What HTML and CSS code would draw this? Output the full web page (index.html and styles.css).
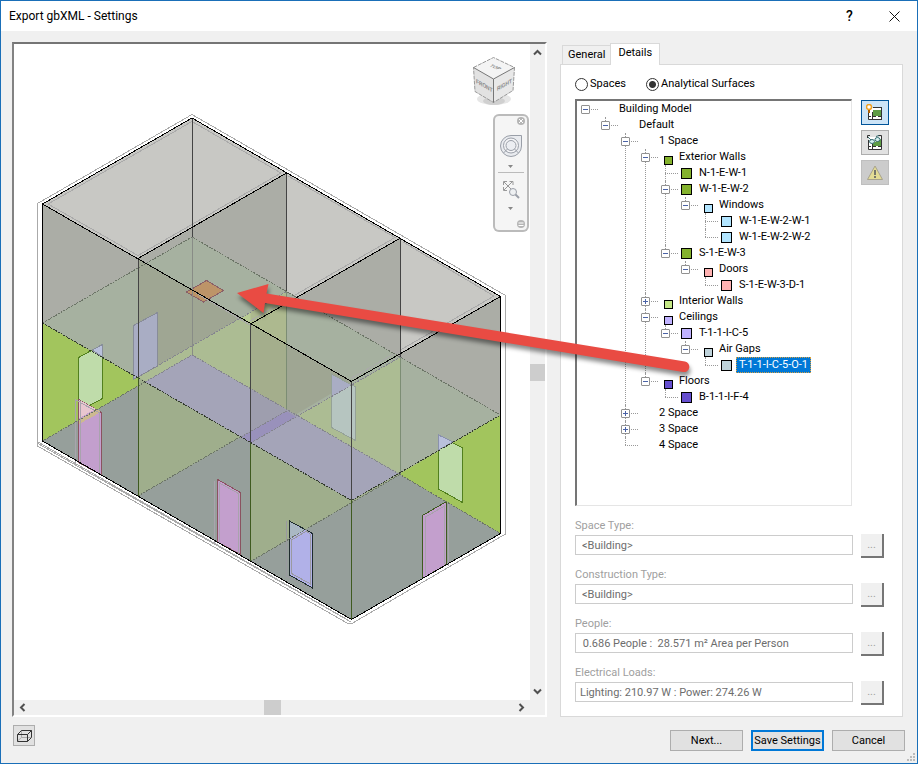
FILE: index.html
```html
<!DOCTYPE html>
<html lang="en">
<head>
<meta charset="utf-8">
<title>Export gbXML - Settings</title>
<link rel="stylesheet" href="styles.css">
</head>
<body>
<div class="dialog">
  <header class="titlebar">
    <h1>Export gbXML - Settings</h1>
    <button class="title-btn" aria-label="Help">?</button>
    <button class="title-btn" aria-label="Close"><svg width="11" height="11" viewBox="0 0 11 11"><path d="M.5.5l10 10M10.5.5l-10 10" stroke="#111" fill="none"/></svg></button>
  </header>

  <main class="content">
    <section class="view" aria-label="Model view">
      <div class="canvas">
        <svg class="model" viewBox="14 44 516 655" preserveAspectRatio="xMinYMin meet">
          <!-- volumes -->
          <path fill="#abada6" d="M42.500 204L192 118 500.500 296.500V533.500L351.500 619.500 42.500 441z"/>
          <path fill="#c8c8c4" d="M42.500 204L192 118 286.500 173 138 258.500zM286.500 173L400.500 238 286.500 303zM400.500 238L500.500 296.500 400.500 354z"/>
          <path fill="#a6b1a0" d="M42.500 323L192 237 500.500 415 351.500 500.500z"/>
          <path fill="#9fa693" d="M138 259L241 318 138 377z"/>
          <path fill="#969f9b" d="M42.500 441L145 382 351.500 500.500 399 474 500.500 533.500 351.500 619.500z"/>
          <path fill="#a2c55d" d="M42.500 323L145 382 42.500 441zM500.500 415L399 474 500.500 533.500z"/>
          <path fill="#acbc93" d="M138 377L286.500 291.500V409.500L192 355 145 382zM297 416L400.500 357V474L297 416z"/>
          <path fill="#b8cc94" d="M241 318L286.500 291.500V303L250.500 324z"/>
          <path fill="#adb98f" d="M250.500 312L286.500 292V344L250.500 324z"/>
          <path fill="#9fa693" d="M286.500 344L351.500 381.500 286.500 420z"/>
          <path fill="#a4ae8c" d="M250.500 324L286.500 344V410L250.500 390z"/>
          <path fill="#9fae8c" d="M138 377L241 437 138 496zM250.500 443L351.500 500.500 399 472V475L250.500 561.500z"/>
          <path fill="#a4a4b8" d="M192 355L398 474 351.500 500.500 145 382z"/>
          <path fill="#9e9eae" d="M250.500 389L297 416 250.500 443 240 437 250.500 431z"/>
          <path fill="#9991bb" d="M241 437L286.500 411 296 417 250.500 443z"/>
          <!-- openings -->
          <g shape-rendering="crispEdges">
            <path fill="#bfdcaa" stroke="#52801e" d="M78.500 357.500L102.500 344.500V398.500L78.500 411.500z"/>
            <path fill="#b9c0dc" stroke="#878e9a" d="M92 350L102.500 344.500V357z"/>
            <path fill="#a9adc4" stroke="#888c98" d="M133.500 325.500L157.500 312.500V366L133.500 379.500z"/>
            <path fill="#b6c5c0" stroke="#95a297" d="M331.500 374L355.500 387V440.500L331.500 427.500z"/>
            <path fill="#a9adc4" d="M332 375L351 385 332 397z"/>
            <path fill="#bfdcaa" stroke="#52801e" d="M438.500 435L462.500 448V502.500L438.500 489z"/>
            <path fill="#b9c0dc" stroke="#8a91ac" d="M438.500 450V435L453 442z"/>
            <path fill="#c39fcd" stroke="#8a5360" d="M78.500 399.500L101.500 412.500V475L78.500 462.500z"/>
            <path fill="#e8c6cf" d="M79 400L96 409 79 418z"/><path fill="#ccb990" d="M79 420L97 409 101 412 79 424z"/>
            <path fill="none" stroke="#a9a3ad" d="M75.500 463V400L80.500 402V463M81 403L99.500 413V473"/>
            <path fill="#c39fcd" stroke="#8a5360" d="M217.500 479.500L240.500 492.500V554.500L217.500 542z"/>
            <path fill="none" stroke="#a9a3ad" d="M214.500 543V480.500M219.500 542V483L238.500 493.500V554"/>
            <path fill="#c39fcd" stroke="#3f5a20" d="M422.500 515.500L446.500 501.500V564.500L422.500 578.500z"/>
            <path fill="none" stroke="#a9a3ad" d="M425.500 575V517L444.500 506V564M448.500 503V566"/>
            <path fill="#b1b1e8" stroke="#1e2b2e" d="M289.500 521L312.500 533.500V588L289.500 575z"/>
            <path fill="#aab8c4" d="M290 522L305 530 290 539z"/>
            <path fill="none" stroke="#9a9aa0" d="M286.500 521V576L311 589M291.500 540V573.500L310.500 584V534.500L306.500 531 291.500 540"/>
            <path fill="#bd9468" stroke="#8a6068" d="M186.500 292L206.500 280.500 223.500 290.500 203.500 302z"/>
          </g>
          <!-- edges -->
          <g fill="none" shape-rendering="crispEdges">
            <path stroke="#aaa" d="M48 204L192 121.500 281 173 138 255.500 48 204M288 176L395 237.500 250 321M403 242L494 296 351 378.500M196 293L250 325M37.500 446V203.500L192 114.500 505.500 295.500V534L351 624 347 623 37.500 446M37 443L351 622M38 442L348 620"/>
            <path stroke="#888c86" d="M192 237V355"/>
            <path stroke="#7c8d74" d="M286.500 291V409M400.500 357V474"/>
            <path stroke="#6c7567" stroke-dasharray="2 1" d="M42.500 323L192 237 500.500 415M145 382L42.500 441M399 474L500.500 533.500M138 496L240 437M250.500 561.500L399 475"/>
            <path stroke="#85858f" stroke-dasharray="2 1" d="M145 382L192 355 399 474M138 377L286.500 291.500M241 437L286.500 411M250.500 443L400.500 357"/>
            <path stroke="#333b2e" stroke-dasharray="2 1" d="M42.500 323L351.500 500.500 500.500 415"/>
            <path stroke="#444" d="M192 118V237M286.500 173V291M400.500 238V357M138 258V377M250.500 324V443M351.500 381V500"/>
            <path stroke="#3f5a20" d="M138 377V496M250.500 443V561M351.500 500V619"/>
            <path stroke="#000" d="M42.500 204L192 118 500.500 296.500 351.500 381.500 42.500 204M138 258.500L286.500 173M250.500 324L400.500 238M42.500 441L351.500 619.500 500.500 533.500M42.500 204V441M500.500 296.500V534"/>
          </g>
        </svg>

        <svg class="viewcube" width="48" height="56" viewBox="470 54 48 56" role="img" aria-label="View cube">
          <ellipse cx="494" cy="99" rx="17" ry="6" fill="#e6e6e6"/>
          <ellipse cx="494" cy="101" rx="11" ry="4" fill="#d0d0d0"/>
          <path d="M473.500 67.500L493.500 57.500 514.500 67.500 493.500 79z" fill="#f4f4f4"/>
          <path d="M473.500 67.500L493.500 79V102.500L475 91.500z" fill="#e2e2e2"/>
          <path d="M514.500 67.500L493.500 79V102.500L513 90.500z" fill="#e8e8e8"/>
          <path d="M473.500 67.500L493.500 57.500 514.500 67.500 513 90.500 493.500 102.500 475 91.500z" fill="none" stroke="#999" stroke-dasharray="4 1"/>
          <path d="M473.500 67.500L493.500 79 514.500 67.500M493.500 79V102.500" fill="none" stroke="#777"/>
          <g fill="#888" font-family="Liberation Sans" font-weight="bold" font-size="6">
            <text transform="matrix(.8 .45 0 1 476 83)">FRONT</text>
            <text transform="matrix(.8 -.45 0 1 497 91)">RIGHT</text>
            <text transform="matrix(.8 .35 -.8 .45 489 66)">TOP</text>
          </g>
        </svg>

        <div class="navbar">
          <svg width="36" height="118" viewBox="493 114 36 118" fill="none" stroke="#9a9fa8">
            <g stroke="none" fill="#b5b5b5"><circle cx="521" cy="121" r="4"/><circle cx="521" cy="224" r="4"/></g>
            <path stroke="#fff" d="M519 119l4 4M523 119l-4 4M518.500 223H523.500M518.500 225.500H523.500"/>
            <path fill="#e9ebef" d="M511 135.500H521.500V146A10.500 10.500 0 1 1 511 135.500z"/>
            <circle cx="511" cy="145.500" r="7.500" fill="#f5f5f7"/><circle cx="511" cy="145.500" r="5" fill="#eceef2"/>
            <path d="M503.500 153L507.500 149M518.500 153L514.500 149"/>
            <path d="M498 172.500H524" stroke="#bbb"/>
            <path fill="#888" stroke="none" d="M508 165H513L510.500 168zM508 207H513L510.500 210z"/>
            <path stroke="#999" d="M504 182L512 190M512 182L504 190M503.500 185V181.500H507M509.500 181.500H513V185M503.500 187V190.500H507"/>
            <circle cx="513" cy="192" r="3.500" fill="#eef0f2"/><path stroke-width="2" d="M515.500 194.500L519 198"/>
          </svg>
        </div>
      </div>
      <div class="vscroll">
        <button aria-label="Scroll up"><svg width="9" height="7" viewBox="0 0 9 7"><path d="M1 5.500L4.500 2 8 5.500" /></svg></button>
        <i class="vthumb"></i>
        <button aria-label="Scroll down"><svg width="9" height="7" viewBox="0 0 9 7"><path d="M1 1.500L4.500 5 8 1.500"/></svg></button>
      </div>
      <div class="hscroll">
        <button aria-label="Scroll left"><svg width="7" height="9" viewBox="0 0 7 9"><path d="M5.500 1L2 4.500 5.500 8"/></svg></button>
        <i class="hthumb"></i>
        <button aria-label="Scroll right"><svg width="7" height="9" viewBox="0 0 7 9"><path d="M1.500 1L5 4.500 1.500 8"/></svg></button>
      </div>
    </section>

    <section class="side">
      <div class="tabs" role="tablist">
        <button class="tab" role="tab">General</button>
        <button class="tab active" role="tab" aria-selected="true">Details</button>
      </div>
      <div class="panel">
        <div class="radios">
          <label><input type="radio" name="mode">Spaces</label>
          <label><input type="radio" name="mode" checked>Analytical Surfaces</label>
        </div>
        <div class="explorer">
          <div class="treebox">
            <ul class="tree">
              <li><div class="row"><button class="tog" aria-label="Collapse"></button><span>Building Model</span></div>
              <ul><li><div class="row"><button class="tog" aria-label="Collapse"></button><span>Default</span></div>
                <ul>
                  <li><div class="row"><button class="tog" aria-label="Collapse"></button><span>1 Space</span></div>
                    <ul>
                      <li><div class="row"><button class="tog" aria-label="Collapse"></button><i class="sw group wall"></i><span>Exterior Walls</span></div>
                        <ul>
                          <li><div class="row"><i class="sw wall"></i><span>N-1-E-W-1</span></div></li>
                          <li><div class="row"><button class="tog" aria-label="Collapse"></button><i class="sw wall"></i><span>W-1-E-W-2</span></div>
                            <ul><li><div class="row"><button class="tog" aria-label="Collapse"></button><i class="sw group win"></i><span>Windows</span></div>
                              <ul>
                                <li><div class="row"><i class="sw win"></i><span>W-1-E-W-2-W-1</span></div></li>
                                <li><div class="row"><i class="sw win"></i><span>W-1-E-W-2-W-2</span></div></li>
                              </ul></li></ul></li>
                          <li><div class="row"><button class="tog" aria-label="Collapse"></button><i class="sw wall"></i><span>S-1-E-W-3</span></div>
                            <ul><li><div class="row"><button class="tog" aria-label="Collapse"></button><i class="sw group door"></i><span>Doors</span></div>
                              <ul><li><div class="row"><i class="sw door"></i><span>S-1-E-W-3-D-1</span></div></li></ul></li></ul></li>
                        </ul></li>
                      <li><div class="row"><button class="tog plus" aria-label="Expand"></button><i class="sw group inner"></i><span>Interior Walls</span></div></li>
                      <li><div class="row"><button class="tog" aria-label="Collapse"></button><i class="sw group ceil"></i><span>Ceilings</span></div>
                        <ul><li><div class="row"><button class="tog" aria-label="Collapse"></button><i class="sw ceil"></i><span>T-1-1-I-C-5</span></div>
                          <ul><li><div class="row"><button class="tog" aria-label="Collapse"></button><i class="sw group gap"></i><span>Air Gaps</span></div>
                            <ul><li><div class="row"><i class="sw gap"></i><span class="selected">T-1-1-I-C-5-O-1</span></div></li></ul></li></ul></li></ul></li>
                      <li><div class="row"><button class="tog" aria-label="Collapse"></button><i class="sw group floor"></i><span>Floors</span></div>
                        <ul><li><div class="row"><i class="sw floor"></i><span>B-1-1-I-F-4</span></div></li></ul></li>
                    </ul></li>
                  <li><div class="row"><button class="tog plus" aria-label="Expand"></button><span>2 Space</span></div></li>
                  <li><div class="row"><button class="tog plus" aria-label="Expand"></button><span>3 Space</span></div></li>
                  <li><div class="row"><span>4 Space</span></div></li>
                </ul></li></ul></li>
            </ul>
          </div>
          <div class="tools">
            <button class="tool on" aria-label="Highlight"><svg width="18" height="18" viewBox="0 0 18 18"><path fill="#fff" d="M3 4H15V16H3z"/><path fill="#5d9c45" d="M7 6H15V12H7z"/><path fill="none" stroke="#333" d="M7 3.500H16M2.500 8V15.500H16M15.500 3V16M6.500 8V16"/><path stroke="#333" stroke-dasharray="3 2" d="M2 12.500H16"/><circle cx="3" cy="3" r="2.500" fill="#fff" stroke="#f0a020" stroke-width="1.500"/><path stroke="#b06000" stroke-width="2" d="M3 6V9"/></svg></button>
            <button class="tool" aria-label="Isolate"><svg width="18" height="18" viewBox="0 0 18 18"><path fill="#fff" d="M3 3H15V16H3z"/><path fill="#5d9c45" d="M7 9L15 5V12H7z"/><path fill="none" stroke="#333" d="M1.500 4V1.500H4M12 1.500H15.500V15.500H2.500V6M6.500 10V16"/><path stroke="#333" stroke-dasharray="3 2" d="M2 12.500H16"/><path fill="none" stroke="#356b70" d="M2 3L5 6M10 2.500L13 1.500"/><ellipse cx="6" cy="7.500" rx="2.500" ry="2" fill="#d5f0ef" stroke="#356b70"/><ellipse cx="11.500" cy="5.500" rx="2.500" ry="2" fill="#d5f0ef" stroke="#356b70"/></svg></button>
            <button class="tool off" aria-label="Show warnings"><svg width="18" height="18" viewBox="0 0 18 18"><path fill="#e3dc94" stroke="#a8a38c" stroke-linejoin="round" d="M9 2L16.500 15.500H1.500z"/><path stroke="#77776a" stroke-width="2" d="M9 6V11M9 12V14"/></svg></button>
          </div>
        </div>
        <form class="fields">
          <div class="field"><label for="space">Space Type:</label><input class="indent" id="space" value="&lt;Building&gt;" readonly><button type="button" aria-label="Choose space type">...</button></div>
          <div class="field"><label for="cons">Construction Type:</label><input class="indent" id="cons" value="&lt;Building&gt;" readonly><button type="button" aria-label="Choose construction type">...</button></div>
          <div class="field"><label for="people">People:</label><input id="people" value=" 0.686 People :  28.571 m² Area per Person" readonly><button type="button" aria-label="Edit people">...</button></div>
          <div class="field"><label for="loads">Electrical Loads:</label><input id="loads" value="Lighting: 210.97 W : Power: 274.26 W" readonly><button type="button" aria-label="Edit electrical loads">...</button></div>
        </form>
      </div>
    </section>
  </main>

  <footer class="footer">
    <button class="box-btn" aria-label="Section box"><svg width="17" height="14" viewBox="0 0 17 14" fill="none" stroke="#333"><path stroke="#aaa" d="M5.500 1V8.500H15M1.500 12L5.500 8.500"/><path d="M1.500 5.500H11.500V12.500H1.500zM1.500 5.500L5.500 1.500H15.500L11.500 5.500M15.500 1.500V8.500L11.500 12.500"/></svg></button>
    <button class="cmd">Next...</button>
    <button class="cmd primary">Save Settings</button>
    <button class="cmd">Cancel</button>
    <svg class="grip" width="8" height="8" viewBox="0 0 8 8" fill="#bbb"><path d="M6 0H8V2H6zM3 3H5V5H3zM6 3H8V5H6zM0 6H2V8H0zM3 6H5V8H3zM6 6H8V8H6z"/></svg>
  </footer>

  <svg class="callout" width="700" height="400" viewBox="0 0 700 400">
    <path d="M237 293L268.500 284 266.500 293.500 685 361.500A5 5 0 0 1 683 372L265 303 263.500 313z"/>
  </svg>
</div>
</body>
</html>
```
FILE: styles.css
```css
* { box-sizing: border-box; }
body { margin: 0; font: 11px/16px Roboto, "Noto Sans", sans-serif; color: #000; }
button, input { font: inherit; color: inherit; margin: 0; padding: 0; }
ul { list-style: none; margin: 0; padding: 0; }
svg { display: block; }

.dialog { position: relative; display: flex; flex-direction: column; min-height: 100vh; border: 1px solid #1a6fb8; background: #f0f0f0; }
.titlebar { display: flex; align-items: center; height: 30px; padding-left: 8px; background: #fff; }
.titlebar h1 { flex: 1; margin: 0; font-size: 12px; font-weight: 400; }
.title-btn { display: flex; align-items: center; justify-content: center; width: 45px; height: 29px; border: 0; background: none; font-size: 14px; font-weight: 500; }

.content { flex: 1; display: grid; grid-template-columns: minmax(0, 1fr) 343px; gap: 13px; padding: 11px 14px 0 11px; }

.view { display: grid; grid-template: minmax(0, 1fr) 15px / minmax(0, 1fr) 15px; border: 2px solid; border-color: #757575 #fff #fff #828282; background: #f0f0f0; }
.canvas { position: relative; background: #fff; overflow: hidden; }
.model { width: 100%; height: 100%; }
.viewcube { position: absolute; top: 10px; right: 12px; }
.navbar { position: absolute; top: 70px; right: 1px; border-radius: 6px; background: #f5f5f5; box-shadow: inset 0 0 0 2px #bbb; }
.vscroll, .hscroll { display: flex; justify-content: space-between; align-items: center; }
.vscroll { flex-direction: column; }
.hscroll { grid-column: 1; }
.vscroll button, .hscroll button { display: grid; place-items: center; width: 17px; height: 17px; border: 0; background: none; }
.vscroll path, .hscroll path { fill: none; stroke: #505050; stroke-width: 2; }
.vthumb, .hthumb { width: 15px; height: 17px; background: #cdcdcd; }
.hthumb { width: 17px; height: 15px; }

.side { display: flex; flex-direction: column; }
.tabs { display: flex; align-items: flex-end; padding-left: 2px; height: 22px; }
.tab { height: 19px; padding: 0 5px; border: 1px solid #d9d9d9; border-bottom: 0; background: #f0f0f0; }
.tab.active { height: 22px; margin: 0 0 -1px -1px; padding: 0 7px 3px; background: #fff; z-index: 1; }
.panel { flex: 1; padding: 11px 13px 0 14px; border: 1px solid #d9d9d9; background: #fff; }
.radios { display: flex; gap: 20px; height: 16px; }
.radios label { display: flex; align-items: center; gap: 2px; }
.radios input { appearance: none; width: 13px; height: 13px; border: 1px solid #333; border-radius: 50%; background: #fff; }
.radios input:checked { background: radial-gradient(circle, #333 0 3px, #fff 4px); }

.explorer { display: grid; grid-template-columns: 1fr 28px; gap: 9px; margin-top: 7px; }
.treebox { height: 407px; border: 2px solid; border-color: #757575 #e5e5e5 #e5e5e5 #757575; border-right-width: 1px; border-bottom-width: 1px; overflow: auto; }
.tree ul { margin-left: 20px; }
.tree li { position: relative; }
.tree li::before { content: ""; position: absolute; top: 0; bottom: 0; left: 8px; border-left: 1px dotted #999; }
.tree > li::before { display: none; }
.tree li:last-child::before { bottom: auto; height: 8px; }
.row { position: relative; display: flex; align-items: center; height: 16px; padding-left: 42px; white-space: nowrap; }
.row::before { content: ""; position: absolute; left: 8px; top: 8px; width: 13px; border-top: 1px dotted #999; }
.tog { position: absolute; left: 4px; top: 4px; width: 9px; height: 9px; border: 1px solid #919191; border-radius: 1px; background: linear-gradient(#4b63a7, #4b63a7) center / 5px 1px no-repeat, #fff; }
.tog.plus { background: linear-gradient(#4b63a7, #4b63a7) center / 5px 1px no-repeat, linear-gradient(#4b63a7, #4b63a7) center / 1px 5px no-repeat, #fff; }
.sw { flex: none; width: 11px; height: 11px; margin: 0 7px 0 -18px; border: 1px solid #000; }
.sw.group { width: 9px; height: 9px; margin: 6px 6px 0 -15px; }
.wall { background: #84b22d; }
.win { background: #b2e5ff; }
.door { background: #ffb2b2; }
.inner { background: #c5e886; }
.ceil { background: #c0b2ff; }
.gap { background: #bed2da; }
.floor { background: #664fcf; }
.selected { margin-left: -3px; padding: 0 3px; background: #0078d7; color: #fff; outline: 1px dotted #d8a040; outline-offset: -1px; }

.tools { display: flex; flex-direction: column; gap: 5px; padding-top: 1px; }
.tool { display: grid; place-items: center; height: 25px; border: 1px solid #adadad; background: #e1e1e1; }
.tool.on { border-color: #005499; background: #cce4f7; }
.tool.off { border-color: #bfbfbf; background: #ccc; }

.fields { display: grid; gap: 9px; padding: 12px 5px 0 0; }
.field { display: grid; grid-template-columns: 1fr 23px; column-gap: 8px; color: #a0a0a0; }
.field label { grid-column: 1 / -1; }
.field input { height: 20px; margin-top: 1px; padding: 0 4px; border: 1px solid #ccc; background: #fff; color: #6d6d6d; min-width: 0; width: 100%; }
.field input.indent { padding-left: 6px; }
.field button { height: 24px; border: 0; border-right: 2px solid #767676; border-bottom: 2px solid #767676; background: #f0f0f0; }

.footer { display: flex; gap: 8px; height: 46px; padding: 8px 12px 0; }
.box-btn { display: grid; place-items: center; width: 22px; height: 21px; margin-right: auto; border: 1px solid #adadad; background: #e1e1e1; }
.cmd { width: 73px; height: 21px; margin-top: 5px; border: 1px solid #adadad; background: #e1e1e1; white-space: nowrap; }
.cmd.primary { border: 2px solid #0078d7; }
.grip { position: absolute; right: 2px; bottom: 2px; }

.callout { position: absolute; left: -1px; top: -1px; pointer-events: none; fill: #e94b43; filter: drop-shadow(1px 4px 2px rgba(0, 0, 0, .45)); }
```
